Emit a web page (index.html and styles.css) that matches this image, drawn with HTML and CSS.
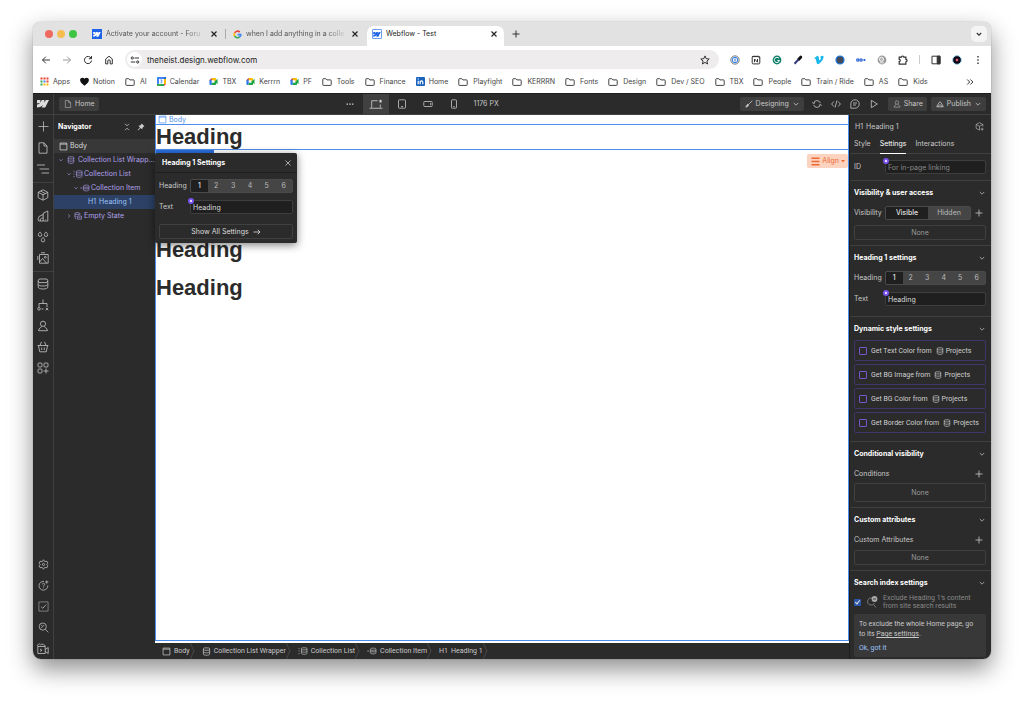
FILE: index.html
```html
<!DOCTYPE html>
<html lang="en">
<head>
<meta charset="utf-8">
<title>Webflow - Test</title>
<link rel="stylesheet" href="styles.css">
</head>
<body>
<svg class="sprite" aria-hidden="true">
  <symbol id="x" viewBox="0 0 8 8"><path d="M1.500 1.500l5 5M6.500 1.500l-5 5"/></symbol>
  <symbol id="plus" viewBox="0 0 8 8"><path d="M4 .5v7M.5 4h7"/></symbol>
  <symbol id="chev" viewBox="0 0 8 8"><path d="M1.800 3l2.200 2.200L6.200 3"/></symbol>
  <symbol id="chev-r" viewBox="0 0 8 8"><path d="M3 1.800L5.200 4 3 6.200"/></symbol>
  <symbol id="folder" viewBox="0 0 10 10"><path d="M.8 2.300a.6.6 0 0 1 .6-.6h2.400l1.100 1.200h3.700a.6.6 0 0 1 .6.6v4.300a.6.6 0 0 1-.6.600H1.400a.6.6 0 0 1-.6-.6z"/></symbol>
  <symbol id="meet" viewBox="0 0 10 10"><path fill="#2a79f0" d="M.5 3.500L3 1.200V8.800H1.500a1 1 0 0 1-1-1z"/><path fill="#fbbc04" d="M3 1.200h4a.8.8 0 0 1 .8.800V4L6 5V3.500H3z"/><path fill="#1ea446" d="M3 6.500h3V5l3.500-3v6L7.800 6.800V8a.8.8 0 0 1-.8.800H3z"/><path fill="#ea4335" d="M.5 3.500h2.500v-2.300z"/></symbol>
  <symbol id="w" viewBox="0 0 12 8"><path fill="currentColor" stroke="none" d="M12 0L8.200 7.600H4.700L6.200 4.500C4.900 6.300 3 7.400 0 7.600V4.600s1.900-.1 3-1.300H0V0h3.400v2.800L4.800 0h2.600v2.800L8.800 0z"/></symbol>
  <symbol id="db" viewBox="0 0 10 10"><rect x="1.500" y="1" width="7" height="2.600" rx="1.300"/><path d="M1.500 2.500v5.300c0 .8 1.400 1.400 3.500 1.400s3.500-.6 3.500-1.400V2.500M1.500 5.200c0 .8 1.400 1.300 3.500 1.300s3.500-.5 3.500-1.300"/></symbol>
  <symbol id="dblist" viewBox="0 0 12 10"><path d="M1 1v1.500M1 4.300v1.400M1 7.500V9"/><rect x="4" y="1" width="7" height="2.600" rx="1.300"/><path d="M4 2.500v5.300c0 .8 1.400 1.400 3.500 1.400S11 8.600 11 7.800V2.500M4 5.200c0 .8 1.400 1.300 3.500 1.300S11 6 11 5.200"/></symbol>
  <symbol id="dbitem" viewBox="0 0 12 10"><path d="M0 5h2.500M4 4V2.800C4 1.900 5.500 1.400 7.500 1.400s3.500.5 3.500 1.400V4M4 6v1.200c0 .9 1.500 1.400 3.500 1.400S11 8.100 11 7.200V6M4 4h7v2H4z"/></symbol>
  <symbol id="dbempty" viewBox="0 0 10 10"><ellipse cx="4.200" cy="2" rx="3" ry="1.300"/><path d="M1.200 2v5.300c0 .6.700 1.100 1.700 1.300M7.200 2v1.500M1.200 4.700c.2.500.8.900 1.800 1M4.500 5h4.800v4H4.500zM5.800 7h2.200"/></symbol>
  <symbol id="body" viewBox="0 0 10 10"><path d="M1.200 1.200h7.600v7.600H1.200zM1.200 2.400h7.600"/></symbol>
  <symbol id="page" viewBox="0 0 12 12"><path d="M2 .8h5L10 4v7.200H2zM7 .8V4h3"/></symbol>
  <symbol id="cube" viewBox="0 0 12 12"><path d="M6 .8l4.800 2.500v5.400L6 11.200 1.200 8.700V3.300zM1.200 3.300L6 5.800l4.800-2.500M6 5.800v5.400M3.600 2.100l4.800 2.500"/></symbol>
  <symbol id="cube-plus" viewBox="0 0 12 12"><path d="M10.500 6V3.300L6 .9 1.500 3.300v5.200L6 10.900M1.500 3.300L6 5.700l4.500-2.400M6 5.700v5.200M9.500 7.500v4M7.500 9.500h4"/></symbol>
  <symbol id="user" viewBox="0 0 12 12"><circle cx="6" cy="3.800" r="2.600"/><path d="M4.600 6.300c0 1.400-3 1.400-3 4.400h8.800c0-3-3-3-3-4.400"/></symbol>
</svg>

<div class="window">
  <header class="tabs">
    <div class="lights"><span class="light red"></span><span class="light amber"></span><span class="light green"></span></div>
    <div class="tab">
      <span class="fav fav-blue"><svg><use href="#w"/></svg></span>
      <span class="tab-title">Activate your account - Foru</span>
      <button class="bare" aria-label="Close tab"><svg class="i8 bold"><use href="#x"/></svg></button>
    </div>
    <div class="tab divided">
      <svg class="i9 nostroke" viewBox="0 0 12 12"><path fill="#ea4335" d="M1.300 3.200A5.500 5.500 0 0 1 9.800 2L8.200 3.500A3.300 3.300 0 0 0 3 4.600z"/><path fill="#fbbc04" d="M1.300 3.200a5.500 5.500 0 0 0 0 5.600L3 7.400a3.400 3.400 0 0 1 0-2.800z"/><path fill="#34a853" d="M1.300 8.800a5.500 5.500 0 0 0 8.300 1.300L7.900 8.700A3.300 3.300 0 0 1 3 7.400z"/><path fill="#4285f4" d="M6 5h5.400c.3 2.200-.3 4-1.800 5.100L7.900 8.700c.6-.4.9-.9 1.100-1.500H6z"/></svg>
      <span class="tab-title">when I add anything in a colle</span>
      <button class="bare" aria-label="Close tab"><svg class="i8 bold"><use href="#x"/></svg></button>
    </div>
    <div class="tab active">
      <span class="fav fav-line"><svg><use href="#w"/></svg></span>
      <span class="tab-title">Webflow - Test</span>
      <button class="bare" aria-label="Close tab"><svg class="i8 bold"><use href="#x"/></svg></button>
    </div>
    <button class="bare new-tab" aria-label="New tab"><svg class="i8"><use href="#plus"/></svg></button>
    <button class="bare tab-search" aria-label="Search tabs"><svg class="i8 bold"><use href="#chev"/></svg></button>
  </header>

  <div class="toolbar">
    <nav class="history">
      <button class="bare" aria-label="Back"><svg class="i10" viewBox="0 0 10 10"><path d="M9 5H1.500M4.800 1.700L1.500 5l3.300 3.300"/></svg></button>
      <button class="bare dim" aria-label="Forward"><svg class="i10" viewBox="0 0 10 10"><path d="M1 5h7.500M5.200 1.700L8.500 5 5.200 8.300"/></svg></button>
      <button class="bare" aria-label="Reload"><svg class="i10" viewBox="0 0 10 10"><path d="M8.200 3.300A3.600 3.600 0 1 0 8.600 5.600M8.500 1v2.700H5.800"/></svg></button>
      <button class="bare" aria-label="Home page"><svg class="i10" viewBox="0 0 10 10"><path d="M1.700 4L5 1.200 8.300 4v4.900H6.200V6a1.200 1.200 0 0 0-2.400 0v2.900H1.700z"/></svg></button>
    </nav>
    <div class="omnibox">
      <button class="bare site" aria-label="Site information"><svg class="i10" viewBox="0 0 10 10"><path d="M4.500 3H9M.8 7h4.500"/><circle cx="2.300" cy="3" r="1.100"/><circle cx="7.700" cy="7" r="1.100"/></svg></button>
      <input class="url" type="text" aria-label="Address" value="theheist.design.webflow.com">
      <button class="bare" aria-label="Bookmark"><svg class="i10" viewBox="0 0 10 10"><path d="M5 .9l1.200 2.800 3 .3-2.300 2 .7 3L5 7.400 2.400 9l.7-3L.8 4l3-.3z"/></svg></button>
    </div>
    <div class="exts">
      <button class="bare" aria-label="Password manager"><svg class="i10" viewBox="0 0 10 10"><circle cx="5" cy="5" r="4.200" fill="#cfe0f5" stroke="#888"/><circle cx="5" cy="5" r="2.700" fill="#fff" stroke="#2f7de1"/><path stroke="#1b5fc0" d="M5 3.500v3"/></svg></button>
      <button class="bare" aria-label="Notion clipper"><svg class="i10" viewBox="0 0 10 10"><rect x="1.200" y="1.300" width="7.600" height="7.600" rx="1"/><path d="M1 1.600h6l1.800 1.200M3.500 7.200V4l3 3.200V4"/></svg></button>
      <button class="bare" aria-label="Grammar"><svg class="i10" viewBox="0 0 10 10"><circle cx="5" cy="5" r="4.400" fill="#11806a" stroke="none"/><path stroke="#fff" d="M7 3.300A2.600 2.600 0 1 0 7.500 5.500H5.500"/></svg></button>
      <button class="bare" aria-label="Color picker"><svg class="i10" viewBox="0 0 10 10"><path stroke="#111" stroke-width="3" stroke-linecap="round" d="M5.800 4.200l1.900-2"/><path stroke="#34387c" stroke-width="2" d="M1.500 8.700L5.500 4.500"/></svg></button>
      <button class="bare" aria-label="Vimeo"><svg class="i10" viewBox="0 0 10 10"><path fill="#1ab7ea" stroke="none" d="M.4 3L3 .9c1.300-.4 1.700.8 1.900 2.200.2 1.300.4 2.300.7 2.300.4 0 1.300-1.400 1.300-2.100 0-.6-.5-.6-.9-.4C6.400 1.500 7.400.7 8.500.8c1.200.1 1.200 1.300.9 2.300C8.700 5.400 5.600 9.200 4 9.200c-1.300 0-1.700-3.200-2.200-5-.1-.6-.5-.4-.9-.2z"/></svg></button>
      <button class="bare" aria-label="Capture"><svg class="i10" viewBox="0 0 10 10"><circle cx="5" cy="5" r="4" fill="#444b57" stroke="#1e78e6" stroke-width="1.200"/></svg></button>
      <button class="bare" aria-label="Connections"><svg class="i10" viewBox="0 0 10 10"><g stroke="#2c63d6" stroke-width="1.200"><circle cx="1.800" cy="5" r="1.200"/><path d="M7.200 5h2.500M8.400 4v2"/><circle cx="5" cy="5" r="1.200"/></g></svg></button>
      <button class="bare" aria-label="Drive"><svg class="i10" viewBox="0 0 10 10"><circle cx="5" cy="5" r="4.400" fill="#999" stroke="none"/><circle cx="4.500" cy="4.300" r="2.200" fill="#bbb" stroke="#fff" stroke-width=".8"/><path stroke="#fff" stroke-width=".8" d="M3 7.800h4"/></svg></button>
      <button class="bare" aria-label="Extensions"><svg class="i10" viewBox="0 0 10 10"><path stroke-width="1.200" d="M1.200 2.200h2.300a1.200 1.200 0 0 1 2.400 0h2v2.200a1.200 1.200 0 0 1 0 2.400v2.300H1.200V6.500a1.100 1.100 0 0 0 0-2.200z"/></svg></button>
      <span class="ext-rule"></span>
      <button class="bare" aria-label="Side panel"><svg class="i10" viewBox="0 0 10 10"><path d="M1 1.200h8v7.600H1z"/><path fill="#333" d="M6.200 1.200H9v7.600H6.200z"/></svg></button>
      <button class="bare" aria-label="Profile"><svg class="i10" viewBox="0 0 10 10"><circle cx="5" cy="5" r="4.400" fill="#0a0a18" stroke="#a9dcf2"/><circle cx="5" cy="5" r="1" fill="#fff" stroke="#e0405e"/></svg></button>
      <button class="bare" aria-label="Menu"><svg class="i10 nostroke" viewBox="0 0 10 10"><path fill="#333" d="M4.300 1h1.400v1.500H4.300zM4.300 4.300h1.400v1.500H4.300zM4.300 7.600h1.400v1.500H4.300z"/></svg></button>
    </div>
  </div>

  <nav class="bookmarks">
    <a href="#apps"><svg class="i9 nostroke" viewBox="0 0 9 9"><path fill="#ea4335" d="M.5.5h2v2h-2zM3.500.5h2v2h-2zM6.500.5h2v2h-2z"/><path fill="#34a853" d="M.5 3.500h2v2h-2z"/><path fill="#4285f4" d="M3.500 3.500h2v2h-2z"/><path fill="#ea4335" d="M6.500 3.500h2v2h-2z"/><path fill="#34a853" d="M.5 6.500h2v2h-2z"/><path fill="#fbbc04" d="M3.500 6.500h2v2h-2zM6.500 6.500h2v2h-2z"/></svg>Apps</a>
    <a href="#notion"><svg class="i9 nostroke" viewBox="0 0 9 9"><path fill="#111" d="M4.500 8.800C2 6.900.1 5.300.1 3.100.1.700 3.300-.1 4.500 1.800 5.700-.1 8.900.7 8.900 3.100c0 2.200-1.900 3.800-4.400 5.700z"/></svg>Notion</a>
    <a class="dir" href="#ai"><svg class="i10"><use href="#folder"/></svg>AI</a>
    <a href="#calendar"><svg class="i9 nostroke" viewBox="0 0 9 9"><path fill="#4285f4" d="M0 0h7v2H0zM0 2h2v5H0z"/><path fill="#1967d2" d="M7 0h2v2H7z"/><path fill="#fbbc04" d="M7 2h2v5H7z"/><path fill="#34a853" d="M0 7h7v2H0z"/><path fill="#ea4335" d="M7 7h2L7 9z"/><path fill="#fff" d="M2 2h5v5H2z"/><path fill="none" stroke="#4285f4" stroke-width=".8" d="M3.400 3h1.800L4.300 4.300c1.500 0 1.300 1.800-.9 1.500"/></svg>Calendar</a>
    <a href="#tbx"><svg class="i9 nostroke"><use href="#meet"/></svg>TBX</a>
    <a href="#kerrrn"><svg class="i9 nostroke"><use href="#meet"/></svg>Kerrrn</a>
    <a href="#pf"><svg class="i9 nostroke"><use href="#meet"/></svg>PF</a>
    <a class="dir" href="#tools"><svg class="i10"><use href="#folder"/></svg>Tools</a>
    <a class="dir" href="#finance"><svg class="i10"><use href="#folder"/></svg>Finance</a>
    <a href="#home"><svg class="i9 nostroke" viewBox="0 0 9 9"><rect width="9" height="9" rx="1" fill="#1a63bd"/><path fill="none" stroke="#fff" stroke-width="1.200" d="M2.200 3.700v3.500M2.200 1.500v1.100M4.200 7.200V3.700M4.200 5c0-1.500 2.600-1.500 2.600.2v2"/></svg>Home</a>
    <a class="dir" href="#playfight"><svg class="i10"><use href="#folder"/></svg>Playfight</a>
    <a class="dir" href="#kerrrn-dir"><svg class="i10"><use href="#folder"/></svg>KERRRN</a>
    <a class="dir" href="#fonts"><svg class="i10"><use href="#folder"/></svg>Fonts</a>
    <a class="dir" href="#design"><svg class="i10"><use href="#folder"/></svg>Design</a>
    <a class="dir" href="#dev"><svg class="i10"><use href="#folder"/></svg>Dev / SEO</a>
    <a class="dir" href="#tbx-dir"><svg class="i10"><use href="#folder"/></svg>TBX</a>
    <a class="dir" href="#people"><svg class="i10"><use href="#folder"/></svg>People</a>
    <a class="dir" href="#train"><svg class="i10"><use href="#folder"/></svg>Train / Ride</a>
    <a class="dir" href="#as"><svg class="i10"><use href="#folder"/></svg>AS</a>
    <a class="dir" href="#kids"><svg class="i10"><use href="#folder"/></svg>Kids</a>
    <button class="bare more" aria-label="More bookmarks"><svg class="i8" viewBox="0 0 8 8"><path d="M1.200 1.500L3.700 4 1.200 6.500M4.400 1.500L6.900 4 4.400 6.500"/></svg></button>
  </nav>

  <div class="app">
    <div class="topbar">
      <div class="top-left">
        <button class="bare logo" aria-label="Webflow"><svg><use href="#w"/></svg></button>
        <button class="chip home"><svg class="i8"><use href="#page"/></svg>Home</button>
      </div>
      <div class="top-mid">
        <button class="bare dots" aria-label="More"><svg class="i8 nostroke" viewBox="0 0 8 8"><path fill="#ccc" d="M.5 3.500h1.500v1.200H.5zM3.200 3.500h1.500v1.200H3.200zM5.900 3.500h1.500v1.200H5.900z"/></svg></button>
        <button class="bare device on" aria-label="Desktop"><svg class="i13" viewBox="0 0 13 10"><path d="M8 1.500H2.500V8M10.500 5v3M.5 8.500h12"/><path fill="#ddd" stroke="none" d="M10.700.2l.5 1.100 1.200.1-.9.800.3 1.200-1.100-.6-1.100.6.300-1.200-.9-.8 1.200-.1z"/></svg></button>
        <button class="bare device" aria-label="Tablet"><svg class="i10" viewBox="0 0 10 10"><rect x="1.500" y=".8" width="7" height="8.400" rx=".8"/><path d="M4 7.600h2"/></svg></button>
        <button class="bare device" aria-label="Mobile landscape"><svg class="i10" viewBox="0 0 10 10"><rect x=".8" y="2.500" width="8.400" height="5" rx=".8"/><path d="M7.500 4v2"/></svg></button>
        <button class="bare device" aria-label="Mobile portrait"><svg class="i10" viewBox="0 0 10 10"><rect x="2.500" y=".8" width="5" height="8.400" rx=".8"/><path d="M4.200 7.700h1.600"/></svg></button>
        <span class="width">1176 PX</span>
      </div>
      <div class="top-right">
        <button class="chip"><svg class="i8" viewBox="0 0 8 8"><path d="M7.300.7L3.500 4.500"/><path fill="#ccc" d="M3.600 4.600C3 6.500 2.500 7 .8 7c.8-.8.600-2 1.600-2.600.5-.3 1-.1 1.200.2z"/></svg>Designing<svg class="i8"><use href="#chev"/></svg></button>
        <div class="tools">
          <button class="bare" aria-label="Sync"><svg class="i10" viewBox="0 0 10 10"><path d="M1.600 4.200A3.500 3.500 0 0 1 8.300 4M8.400 5.800A3.500 3.500 0 0 1 1.700 6M.3 3.500l1.300 1.200L3 3.700M9.700 6.500L8.400 5.300 7 6.300"/></svg></button>
          <button class="bare" aria-label="Code"><svg class="i10" viewBox="0 0 10 10"><path d="M2.800 2.500L.6 5l2.200 2.500M7.200 2.500L9.400 5 7.200 7.500M6 1.500l-2 7"/></svg></button>
          <button class="bare" aria-label="Comments"><svg class="i10" viewBox="0 0 10 10"><path d="M.8 9.200V5A4.200 4.200 0 1 1 5 9.200zM3 4h4M3 6h3"/></svg></button>
          <button class="bare" aria-label="Preview"><svg class="i10" viewBox="0 0 10 10"><path d="M2.300 1.300L8.300 5l-6 3.700z"/></svg></button>
        </div>
        <button class="chip"><svg class="i8"><use href="#user"/></svg>Share</button>
        <button class="chip"><svg class="i8" viewBox="0 0 8 8"><path d="M.7 6.800L3 2.600a1.200 1.200 0 0 1 2 0l2.300 4.200zM2.200 6.800c0-2.500 3.600-2.500 3.600 0"/></svg>Publish<svg class="i8"><use href="#chev"/></svg></button>
      </div>
    </div>

    <div class="work">
      <aside class="rail">
        <div class="rail-group">
          <button class="bare" aria-label="Add"><svg class="i11" viewBox="0 0 12 12"><path d="M6 .5v11M.5 6h11"/></svg></button>
          <button class="bare" aria-label="Pages"><svg class="i12"><use href="#page"/></svg></button>
          <button class="bare" aria-label="Navigator"><svg class="i12" viewBox="0 0 12 12"><path d="M0 2h8M2.500 6H12M4.500 10H12"/></svg></button>
        </div>
        <div class="rail-group">
          <button class="bare" aria-label="Components"><svg class="i12"><use href="#cube"/></svg></button>
          <button class="bare" aria-label="Variables"><svg class="i12" viewBox="0 0 12 12"><path d="M6.200 11V3.200L10.800 1v10zM6.200 11H2.500a1.500 1.500 0 0 1-1.400-1.900L2 6.500l4.200-2M3.500 11C2.500 9.500 3.500 8 6 8M8.600 9v.5"/></svg></button>
          <button class="bare" aria-label="Styles"><svg class="i12" viewBox="0 0 12 12"><path d="M3 .9c1 1.300 1.700 1.900 1.700 2.900a1.700 1.700 0 0 1-3.400 0C1.300 2.800 2 2.200 3 .9zM9 .9c1 1.300 1.700 1.900 1.700 2.900a1.700 1.700 0 0 1-3.400 0c0-1 .7-1.600 1.700-2.900zM6 6.300c1 1.300 1.700 1.900 1.700 2.900a1.700 1.700 0 0 1-3.400 0c0-1 .7-1.600 1.700-2.900z"/></svg></button>
          <button class="bare" aria-label="Assets"><svg class="i12" viewBox="0 0 12 12"><path d="M2.500 2.500h8.700v8.700H2.500zM.8 8V4M2.500 10l3-3.500L9.500 11M4 .8h4"/><circle cx="8.300" cy="5.300" r=".9"/></svg></button>
        </div>
        <div class="rail-group">
          <button class="bare" aria-label="CMS"><svg class="i12" viewBox="0 0 12 12"><rect x="1.200" y="1" width="9.600" height="3.600" rx="1.800"/><path d="M1.200 3v6c0 1.200 1.500 2 4.800 2s4.800-.8 4.800-2V3M1.200 6.500c.5 1 2 1.500 4.800 1.500s4.300-.5 4.800-1.500"/></svg></button>
          <button class="bare" aria-label="Logic"><svg class="i12" viewBox="0 0 12 12"><path d="M6 .5v4M2 8V4.500h8V8M8.700 8.800l2.500 2.500M11.200 8.800l-2.500 2.500"/><circle cx="2" cy="9.800" r="1.300"/><path d="M4.500 10h2"/></svg></button>
          <button class="bare" aria-label="Users"><svg class="i12"><use href="#user"/></svg></button>
          <button class="bare" aria-label="Ecommerce"><svg class="i12" viewBox="0 0 12 12"><path d="M.6 4.500h10.800M1.500 4.500l1.200 6.300h6.600l1.200-6.300M3 4.500L4.500.8M9 4.500L7.500.8M4.700 6.500v2.500M7.300 6.500v2.500"/></svg></button>
          <button class="bare" aria-label="Apps"><svg class="i12" viewBox="0 0 12 12"><rect x="1" y="1" width="4" height="4" rx="1"/><rect x="7" y="1" width="4" height="4" rx="1"/><rect x="1" y="7" width="4" height="4" rx="1"/><path d="M9 6.500v5M6.500 9h5"/></svg></button>
        </div>
        <div class="rail-group rail-end">
          <button class="bare" aria-label="Settings"><svg class="i11" viewBox="0 0 12 12"><path d="M6 .8l1.300 2L9.800 2.500 10.800 4.500 9.600 6l1.200 1.500-1 2-2.500-.3L6 11.200l-1.300-2-2.500.3-1-2L2.400 6 1.200 4.500l1-2 2.500.3z"/><circle cx="6" cy="6" r="1.200"/></svg></button>
          <button class="bare" aria-label="Help"><svg class="i11" viewBox="0 0 12 12"><path d="M6.500 1.500A4.800 4.800 0 1 0 10.700 6M4.600 4.800c.2-1.800 3-1.500 2.700.2C7.200 6 6 6 6 7.300M6 8.300v.8M9.500.5v3.500M7.800 2.200h3.500"/></svg></button>
          <button class="bare" aria-label="Audit"><svg class="i11" viewBox="0 0 12 12"><path d="M1 1h10v10H1z" opacity=".7"/><path d="M3.300 6.200L5.200 8l3.500-4"/></svg></button>
          <button class="bare" aria-label="Search"><svg class="i11" viewBox="0 0 12 12"><circle cx="5.200" cy="5" r="3.900"/><path d="M8 8l3.200 3.300M3.300 6.800l3.500-3.500M3.500 4.200l1-1"/></svg></button>
          <button class="bare" aria-label="Video tutorials"><svg class="i12" viewBox="0 0 12 12"><path d="M.8 3.500h7.400v7H.8zM8.200 6.500l3-2v6l-3-2M.8 3.500a1.500 1.500 0 0 1 2.700-1.700A1.800 1.800 0 0 1 6.500 2c1.300-.2 2 .7 1.700 1.500M3 6l2 1.200L3 8.500"/></svg></button>
        </div>
      </aside>

      <aside class="navigator">
        <div class="nav-head">
          <h2>Navigator</h2>
          <button class="bare" aria-label="Collapse all"><svg class="i8" viewBox="0 0 8 8"><path d="M2 .8L4 2.800 6 .8M2 7.200l2-2 2 2"/></svg></button>
          <button class="bare" aria-label="Pin"><svg class="i8" viewBox="0 0 8 8"><path fill="#ccc" stroke="none" d="M4.700.5L7.500 3.300l-.8.300-1.300 1.300-.1 1.700-1.700-1.600L1 7.400.6 7 3 4.400 1.400 2.700l1.700-.1 1.300-1.300z"/></svg></button>
        </div>
        <ul class="tree">
          <li class="row root"><svg class="i9"><use href="#body"/></svg>Body</li>
          <li class="row d1"><svg class="i6"><use href="#chev"/></svg><svg class="i8"><use href="#db"/></svg><span class="clip">Collection List Wrapp...</span></li>
          <li class="row d2"><svg class="i6"><use href="#chev"/></svg><svg class="i10x8"><use href="#dblist"/></svg>Collection List</li>
          <li class="row d3"><svg class="i6"><use href="#chev"/></svg><svg class="i10x8"><use href="#dbitem"/></svg>Collection Item</li>
          <li class="row d4 picked"><span class="tag">H1</span>Heading 1</li>
          <li class="row d2"><svg class="i6"><use href="#chev-r"/></svg><svg class="i10x8"><use href="#dbempty"/></svg>Empty State</li>
        </ul>
      </aside>

      <section class="stage">
        <main class="canvas">
          <div class="body-label"><svg class="i9"><use href="#body"/></svg>Body</div>
          <h1 class="sample selected">Heading</h1>
          <div class="align-row"><span class="badge"></span><button class="align"><svg class="i9" viewBox="0 0 9 9"><path stroke-width="1.500" d="M.5 1.200h8M.5 4.500h8M.5 7.800h8"/></svg>Align<svg class="caret" viewBox="0 0 4 3"><path d="M0 0h4L2 2.500z"/></svg></button></div>
          <h1 class="sample second">Heading</h1>
          <h1 class="sample">Heading</h1>

          <div class="popup" role="dialog" aria-label="Heading 1 Settings">
            <div class="popup-head"><h2>Heading 1 Settings</h2><button class="bare" aria-label="Close"><svg class="i8"><use href="#x"/></svg></button></div>
            <div class="popup-body">
              <div class="field"><span class="label">Heading</span><div class="seg"><button class="on">1</button><button>2</button><button>3</button><button>4</button><button>5</button><button>6</button></div></div>
              <div class="field"><label class="label" for="pop-text">Text</label><span class="bound"><input id="pop-text" type="text" value="Heading"></span></div>
              <button class="ghost show-all">Show All Settings<svg class="i8" viewBox="0 0 8 8"><path d="M.5 4h6.500M4.700 1.700L7 4 4.700 6.300"/></svg></button>
            </div>
          </div>
        </main>
        <nav class="crumbs">
          <a href="#body"><svg class="i9"><use href="#body"/></svg>Body</a>
          <a href="#wrapper"><svg class="i9"><use href="#db"/></svg>Collection List Wrapper</a>
          <a href="#list"><svg class="i10x8"><use href="#dblist"/></svg>Collection List</a>
          <a href="#item"><svg class="i10x8"><use href="#dbitem"/></svg>Collection Item</a>
          <a href="#heading"><span>H1</span>Heading 1</a>
        </nav>
      </section>

      <aside class="panel">
        <div class="panel-head"><span><span class="tag">H1</span>Heading 1</span><button class="bare" aria-label="Create component"><svg class="i9"><use href="#cube-plus"/></svg></button></div>
        <div class="panel-tabs"><button>Style</button><button class="on">Settings</button><button>Interactions</button></div>
        <section class="group id-group">
          <div class="field"><label class="label" for="el-id">ID</label><span class="bound"><input id="el-id" type="text" placeholder="For in-page linking"></span></div>
        </section>
        <section class="group roomy">
          <h3>Visibility &amp; user access<svg class="i8"><use href="#chev"/></svg></h3>
          <div class="field"><span class="label">Visibility</span><div class="seg"><button class="on">Visible</button><button>Hidden</button></div><button class="bare add" aria-label="Add visibility condition"><svg class="i8"><use href="#plus"/></svg></button></div>
          <button class="ghost">None</button>
        </section>
        <section class="group heading-group roomy">
          <h3>Heading 1 settings<svg class="i8"><use href="#chev"/></svg></h3>
          <div class="field"><span class="label">Heading</span><div class="seg"><button class="on">1</button><button>2</button><button>3</button><button>4</button><button>5</button><button>6</button></div></div>
          <div class="field"><label class="label" for="el-text">Text</label><span class="bound"><input id="el-text" type="text" value="Heading"></span></div>
        </section>
        <section class="group dynamic">
          <h3>Dynamic style settings<svg class="i8"><use href="#chev"/></svg></h3>
          <label class="bind"><input type="checkbox">Get Text Color from<svg class="i8"><use href="#db"/></svg>Projects</label>
          <label class="bind"><input type="checkbox">Get BG Image from<svg class="i8"><use href="#db"/></svg>Projects</label>
          <label class="bind"><input type="checkbox">Get BG Color from<svg class="i8"><use href="#db"/></svg>Projects</label>
          <label class="bind"><input type="checkbox">Get Border Color from<svg class="i8"><use href="#db"/></svg>Projects</label>
        </section>
        <section class="group tight">
          <h3>Conditional visibility<svg class="i8"><use href="#chev"/></svg></h3>
          <div class="field">Conditions<button class="bare add" aria-label="Add condition"><svg class="i8"><use href="#plus"/></svg></button></div>
          <button class="ghost tall">None</button>
        </section>
        <section class="group tight">
          <h3>Custom attributes<svg class="i8"><use href="#chev"/></svg></h3>
          <div class="field attrs">Custom Attributes<button class="bare add" aria-label="Add attribute"><svg class="i8"><use href="#plus"/></svg></button></div>
          <button class="ghost">None</button>
        </section>
        <section class="group search">
          <h3>Search index settings<svg class="i8"><use href="#chev"/></svg></h3>
          <label class="exclude"><input type="checkbox" checked><svg class="i12" viewBox="0 0 12 12"><path d="M6 2A3.600 3.600 0 1 0 8.500 7M7.500 8.500l2.500 3"/><circle cx="8.500" cy="3" r="2.900" fill="#aaa" stroke="none"/><path stroke="#2b2b2b" d="M7 3h3"/></svg><span>Exclude Heading 1's content from site search results</span></label>
          <div class="notice"><p>To exclude the whole Home page, go to its <a href="#page">Page settings</a>.</p><button class="bare ok">Ok, got it</button></div>
        </section>
      </aside>
    </div>
  </div>
</div>
</body>
</html>
```
FILE: styles.css
```css
*, *::before, *::after { box-sizing: border-box; }
body {
  margin: 0;
  min-height: 100vh;
  padding: 22px 33px 43px;
  display: flex;
  background: #fff;
  font: 7px/10px Inter, "Liberation Sans", sans-serif;
  color: #333;
}
h1, h2, h3, p, ul { margin: 0; padding: 0; }
button, input { font: inherit; color: inherit; }
button { cursor: pointer; }
.sprite { position: absolute; width: 0; height: 0; }
svg { fill: none; stroke: currentColor; stroke-width: 1; flex: none; display: block; }
.app svg { stroke-width: .8; }
.i6 { width: 6px; height: 6px; }
.i8 { width: 8px; height: 8px; }
.i9 { width: 9px; height: 9px; }
.i10 { width: 10px; height: 10px; }
.i11 { width: 11px; height: 11px; }
.i12 { width: 12px; height: 12px; }
.i13 { width: 14px; height: 11px; }
.i10x8 { width: 10px; height: 8px; }
.nostroke { stroke: none; }
.bare {
  border: 0; padding: 0; background: none;
  display: flex; align-items: center; justify-content: center; flex: none;
}

.window {
  flex: 1; min-width: 0;
  display: flex; flex-direction: column;
  border-radius: 8px; overflow: hidden;
  background: #fff;
  box-shadow: 0 0 1px rgba(0,0,0,.5), 0 10px 24px rgba(0,0,0,.45);
}

/* Browser chrome */
.tabs { display: flex; align-items: flex-end; height: 24px; background: #e2e2e2; flex: none; }
.lights { display: flex; gap: 4px; padding: 0 15px 8px 12px; }
.light { width: 8px; height: 8px; border-radius: 50%; }
.red { background: #ee6a5f; }
.amber { background: #f5bd4f; }
.green { background: #3fc544; }
.tab { display: flex; align-items: center; gap: 4px; width: 132px; height: 20px; padding: 0 6px 4px 0; color: #555; margin-right: 1px; }
.tab .bare { color: #222; }
.tab.divided { width: 141px; padding: 0 7px 4px; border-left: 1px solid transparent; border-image: linear-gradient(transparent 20%, #aaa 20%, #aaa 65%, transparent 65%) 1; }
.tab.active { width: 137px; padding-left: 5px; border-radius: 7px 7px 0 0; background: #fff; color: #222; margin: 0; }
.tab-title { flex: 1; min-width: 0; overflow: hidden; white-space: nowrap; }
.tab:not(.active) .tab-title { mask-image: linear-gradient(90deg, #000 80%, transparent); }
.fav { width: 10px; height: 10px; display: flex; align-items: center; justify-content: center; }
.fav svg { width: 8px; height: 5px; }
.fav-blue { background: #1f63e8; color: #fff; }
.fav-line { border: 1px solid #6b9bf5; border-radius: 1px; color: #1f63e8; }
.bold { stroke-width: 1.200; }
.new-tab { width: 24px; height: 24px; }
.tab-search { width: 16px; height: 16px; margin: 0 4px 4px auto; border-radius: 5px; background: #f4f4f4; }

.toolbar { display: flex; align-items: center; height: 27px; flex: none; padding: 0 3px 0 2px; }
.history { display: flex; }
.history .bare { width: 21px; }
.toolbar .dim { color: #999; }
.omnibox { flex: 1; display: flex; align-items: center; height: 19px; margin: 0 5px 0 6px; padding: 0 9px 0 2px; border-radius: 10px; background: #eeecec; }
.site { width: 15px; height: 15px; border-radius: 50%; background: #fff; }
.url { flex: 1; min-width: 0; border: 0; padding: 0 0 0 5px; background: none; font-size: 8px; color: #222; outline: 0; }
.exts { display: flex; align-items: center; }
.exts .bare { width: 21px; }
.ext-rule { width: 1px; height: 9px; margin: 0 5px 0 6px; background: #ccc; }

.bookmarks { display: flex; align-items: center; gap: 10px; height: 20px; padding: 0 17px 3px 7px; flex: none; }
.bookmarks a { display: flex; align-items: center; gap: 4px; color: #444; text-decoration: none; white-space: nowrap; }
.bookmarks .dir { gap: 5px; }
.more { margin-left: auto; }

/* Designer */
.app { flex: 1; display: flex; flex-direction: column; background: #2b2b2b; color: #c8c8c8; border-top: 1px solid #1d1d1d; }
.topbar { display: flex; justify-content: space-between; align-items: stretch; height: 21px; border-bottom: 1px solid #404040; flex: none; }
.topbar > div { display: flex; align-items: center; }
.top-left { gap: 5px; }
.top-right { gap: 4px; padding-right: 5px; }
.logo { width: 21px; align-self: stretch; border-right: 1px solid #404040; color: #ddd; }
.logo svg { width: 12px; height: 8px; }
.chip { display: flex; align-items: center; gap: 3px; height: 14px; padding: 0 4px 0 5px; border: 0; border-radius: 2px; background: #3e3e3e; }
.dots { width: 26px; }
.device { width: 26px; align-self: stretch; }
.device.on { background: #404040; }
.width { padding: 0 3px 0 7px; }
.tools { display: flex; }
.tools .bare { width: 19px; }

.work { flex: 1; display: flex; }
.rail { width: 21px; display: flex; flex-direction: column; border-right: 1px solid #404040; }
.rail-group { padding: 1px 0 3px; border-bottom: 1px solid #404040; }
.rail-group .bare { width: 100%; height: 21px; }
.rail-group:nth-child(3) { border: 0; }
.rail .rail-end { margin-top: auto; padding: 0; border: 0; }

.navigator { width: 101px; }
.nav-head { display: flex; align-items: center; gap: 6px; height: 24px; padding: 0 10px 0 4px; }
.nav-head h2 { flex: 1; }
h2, h3 { font-size: 7px; line-height: 10px; font-weight: 700; color: #fff; }
.tree { list-style: none; }
.row { display: flex; align-items: center; gap: 3px; height: 14px; color: #b0a0ec; white-space: nowrap; }
.root { padding-left: 5px; gap: 2px; background: #383838; color: #ddd; }
.d1 { padding-left: 4px; }
.d2 { padding-left: 12px; gap: 1px; }
.d3 { padding-left: 19px; gap: 1px; }
.d4 { padding-left: 34px; }
.picked { background: #2c4165; color: #9cc3f8; }
.clip { overflow: hidden; }
.tag { margin-right: 3px; }
.row .tag { margin-right: 0; }

.stage { flex: 1; min-width: 0; display: flex; flex-direction: column; background: #fff; }
.canvas { position: relative; flex: 1; margin-bottom: 2px; border: solid #4d8fee; border-width: 0 1px 1px; background: #fff; }
.body-label { display: flex; align-items: center; gap: 2px; height: 9px; padding-left: 2px; line-height: 9px; color: #4d8fee; }
.sample { height: 26px; margin-bottom: 12px; font: bold 22px/26px "Liberation Sans", Arial, sans-serif; color: #2b2b2b; }
.sample.selected { margin: 0; border: solid #4d8fee; border-width: 1px 0; line-height: 24px; }
.align-row { display: flex; justify-content: space-between; align-items: flex-start; }
.badge { width: 58px; height: 8px; background: #2a6fe0; }
.align { display: flex; align-items: center; gap: 2px; height: 14px; margin-top: 4px; padding: 0 3px 0 4px; border: 0; border-radius: 2px; background: #fcd3bf; color: #ee6a34; }
.app .caret { width: 4px; height: 3px; fill: #ee6a34; stroke: none; }
.sample.second { margin-top: 69px; }

.popup { position: absolute; left: -1px; top: 38px; width: 142px; border-radius: 2px; background: #2b2b2b; box-shadow: 0 2px 8px rgba(0,0,0,.5); }
.popup-head { display: flex; align-items: center; justify-content: space-between; height: 20px; padding: 0 5px 0 7px; border-bottom: 1px solid #1f1f1f; }
.popup-body { padding: 6px 4px 4px; }
.popup .field { margin-bottom: 7px; }
.popup .show-all { margin-top: 10px; display: flex; align-items: center; justify-content: center; gap: 4px; color: #ddd; }

.field { display: flex; align-items: center; }
.label { width: 31px; flex: none; }
.seg { flex: 1; display: flex; height: 14px; border: 1px solid #4a4a4a; border-radius: 2px; background: #454545; overflow: hidden; }
.seg button { flex: 1; padding: 0; border: 0; background: none; color: #bbb; }
.seg button.on { background: #1f1f1f; color: #fff; }
.bound { position: relative; flex: 1; display: flex; }
.bound::before { content: ""; position: absolute; left: -2px; top: -2px; width: 6px; height: 6px; border: 2px solid #7a52ee; border-radius: 50%; background: #fff; }
.bound input { width: 100%; height: 14px; padding: 0 2px; border: 1px solid #3e3e3e; border-radius: 2px; background: #1f1f1f; color: #ddd; outline: 0; }
.bound input::placeholder { color: #888; }
.ghost { display: block; width: 100%; height: 15px; padding: 0; border: 1px solid #404040; border-radius: 2px; background: none; color: #999; }

.crumbs { display: flex; height: 16px; padding-left: 1px; background: #2b2b2b; overflow: hidden; }
.crumbs, .bind, .exclude, .notice { font-family: Roboto, Inter, sans-serif; }
.crumbs a { position: relative; display: flex; align-items: center; gap: 3px; padding: 0 6px; color: #c8c8c8; text-decoration: none; }
.crumbs a::after { content: ""; position: absolute; right: 1px; top: 2px; width: 12px; height: 12px; border: solid #4a4a4a; border-width: 1px 1px 0 0; transform: rotate(45deg) skew(20deg, 20deg); }

.panel { width: 142px; border-left: 1px solid #1d1d1d; }
.panel-head { display: flex; align-items: center; justify-content: space-between; height: 23px; padding: 0 7px 0 5px; }
.panel-tabs { display: flex; gap: 9px; height: 16px; padding: 0 4px; border-bottom: 1px solid #404040; }
.panel-tabs button { padding: 0 0 3px; border: 0; border-bottom: 1px solid transparent; background: none; height: 16px; }
.panel-tabs .on { border-color: #fff; color: #fff; }
.group { padding: 0 5px 5px 4px; border-bottom: 1px solid #404040; }
.group h3 { display: flex; align-items: center; justify-content: space-between; height: 24px; }
.group.roomy h3 { height: 25px; padding-bottom: 2px; }
.group h3 svg { color: #bbb; }
.group .seg + .add { width: 15px; }
.group .ghost { margin-top: 5px; }
.group.id-group { padding: 6px 5px 6px 4px; }
.group.heading-group { padding-bottom: 10px; }
.heading-group .field + .field { margin-top: 7px; }
.group.dynamic { padding-bottom: 8px; }
.group.dynamic h3, .group.search h3 { height: 23px; }
.bind { display: flex; align-items: center; gap: 4px; height: 21px; padding: 0 4px; border: 1px solid #40366b; border-radius: 2px; color: #d0d0d0; white-space: nowrap; }
.bind + .bind { margin-top: 3px; }
.bind input { appearance: none; width: 8px; height: 8px; margin: 0; border: 1px solid #7458c8; border-radius: 1px; }
.bind svg { margin-right: -2px; }
.tight .field { height: 15px; justify-content: space-between; }
.tight .attrs { height: 16px; }
.tight .add { width: 15px; }
.group.tight .ghost { margin-top: 2px; }
.tight .tall { height: 19px; }
.group.search { padding-bottom: 2px; border: 0; }
.exclude { display: flex; align-items: center; gap: 5px; color: #888; line-height: 8px; padding-bottom: 4px; }
.exclude input { appearance: none; display: flex; justify-content: center; width: 7px; height: 7px; margin: 0; border-radius: 1px; background: #2b57a8; flex: none; }
.exclude input::before { content: ""; width: 3px; height: 5px; border: solid #ddd; border-width: 0 1px 1px 0; transform: rotate(40deg); }
.notice { padding: 5px 5px 4px; border-radius: 2px; background: #383838; }
.notice a { color: inherit; }
.ok { margin-top: 4px; color: #9cc3f8; }
```
